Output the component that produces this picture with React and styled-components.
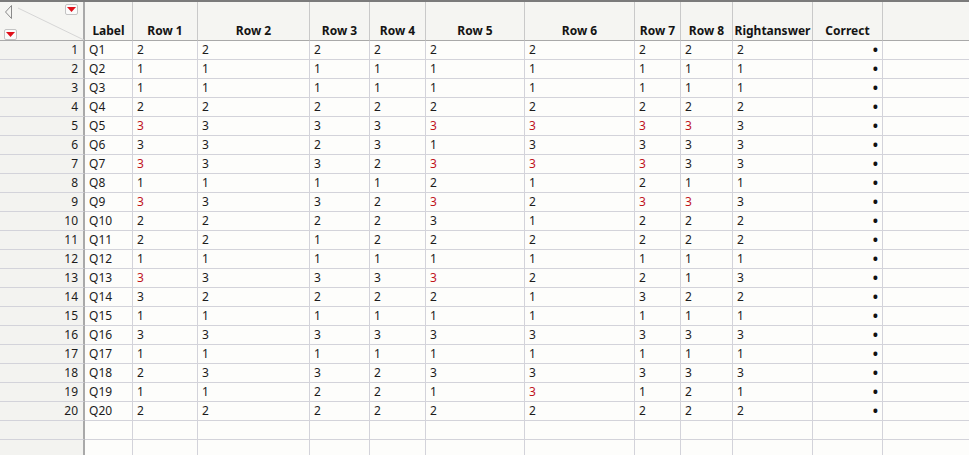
import React from "react";
import styled, { createGlobalStyle } from "styled-components";

const Global = createGlobalStyle`
  html, body { margin: 0; padding: 0; background: #fdfdfb; }
  body { font-family: "Noto Sans", "Open Sans", sans-serif; }
`;

const COLS = [48, 65, 112, 60, 56, 99, 110, 46, 52, 80, 70];
const HEADERS = ["Label", "Row 1", "Row 2", "Row 3", "Row 4", "Row 5", "Row 6", "Row 7", "Row 8", "Rightanswer", "Correct"];

const DATA = [
  "222222222", "111111111", "111111111", "222222222", "333333333",
  "332313333", "333233333", "111121211", "333232333", "222231222",
  "221222222", "111111111", "333332213", "322221322", "111111111",
  "333333333", "111111111", "233233333", "112213121", "222222222",
];

const RED = new Set([
  "4-0", "4-4", "4-5", "4-6", "4-7",
  "6-0", "6-4", "6-5", "6-6",
  "8-0", "8-4", "8-6", "8-7",
  "12-0", "12-4",
  "18-5",
]);

const Page = styled.div`
  width: 969px;
  height: 455px;
  overflow: hidden;
  border-top: 2px solid #7b7b7b;
  box-sizing: border-box;
  background: #fdfdfb;
`;

const Grid = styled.div`
  display: grid;
  grid-template-columns: 85px ${COLS.map((c) => c + "px").join(" ")} 1fr;
  grid-auto-rows: 19px;
  grid-template-rows: 39px;
  font-size: 12px;
  color: #1c1c1c;
`;

const Corner = styled.div`
  position: relative;
  background: #f5f5f2;
  border-right: 2px solid #a9a9a9;
  border-bottom: 1px solid #a9a9a9;
  box-sizing: border-box;
`;

const HeadCell = styled.div`
  background: #f5f5f2;
  border-right: 1px solid #c9c9c9;
  border-bottom: 1px solid #a9a9a9;
  box-sizing: border-box;
  display: flex;
  align-items: flex-end;
  justify-content: center;
  padding-bottom: 0;
  font-weight: 700;
  font-size: 12px;
  line-height: 18px;
  color: #141414;
  white-space: nowrap;
  overflow: hidden;
`;

const RowNum = styled.div`
  background: #f3f3f0;
  border-right: 2px solid #a9a9a9;
  border-bottom: 1px solid #d3d3da;
  box-sizing: border-box;
  text-align: right;
  padding-right: 5px;
  line-height: 18px;
`;

const Cell = styled.div`
  border-right: 1px solid #d3d3da;
  border-bottom: 1px solid #d3d3da;
  box-sizing: border-box;
  padding: 0 4px;
  line-height: 18px;
  text-align: left;
  color: ${(p) => (p.$red ? "#c0141c" : "#1c1c1c")};
  white-space: nowrap;
  overflow: hidden;
`;

const DotCell = styled(Cell)`
  text-align: right;
  font-size: 14px;
  font-weight: 700;
  line-height: 18px;
  overflow: visible;
  color: #111;
`;

const Filler = styled.div`
  border-bottom: 1px solid #d3d3da;
  box-sizing: border-box;
`;

const HeadFiller = styled.div`
  background: #f5f5f2;
  border-bottom: 1px solid #a9a9a9;
  box-sizing: border-box;
`;

const MenuBtn = styled.div`
  position: absolute;
  left: ${(p) => p.$x}px;
  top: ${(p) => p.$y}px;
  width: 13px;
  height: 11px;
  box-sizing: border-box;
  border: 1px solid #c4c4c4;
  border-radius: 2px;
  background: #fbfbfb;
  display: flex;
  align-items: center;
  justify-content: center;
`;

const Diag = styled.svg`
  position: absolute;
  left: 0;
  top: 0;
`;

function RedTri() {
  return (
    <svg width="9" height="5" viewBox="0 0 9 5">
      <polygon points="0,0 9,0 4.5,5" fill="#e0101a" />
    </svg>
  );
}

export default function App() {
  const rows = [];
  DATA.forEach((vals, r) => {
    rows.push(<RowNum key={`n${r}`}>{r + 1}</RowNum>);
    rows.push(<Cell key={`l${r}`}>Q{r + 1}</Cell>);
    vals.split("").forEach((v, c) => {
      rows.push(
        <Cell key={`c${r}-${c}`} $red={RED.has(`${r}-${c}`)}>
          {v}
        </Cell>
      );
    });
    rows.push(<DotCell key={`k${r}`}>•</DotCell>);
    rows.push(<Filler key={`f${r}`} />);
  });
  for (let r = 0; r < 3; r++) {
    rows.push(<RowNum key={`en${r}`} />);
    COLS.forEach((_, c) => rows.push(<Cell key={`e${r}-${c}`} />));
    rows.push(<Filler key={`ef${r}`} />);
  }

  return (
    <Page>
      <Global />
      <Grid>
        <Corner>
          <Diag width="85" height="39">
            <line x1="18" y1="6" x2="84" y2="38" stroke="#d6d6d6" strokeWidth="1" />
            <polygon points="11.5,3.5 5.5,10 11.5,16.5" fill="none" stroke="#8a8a8a" strokeWidth="1" />
          </Diag>
          <MenuBtn $x={65} $y={2}>
            <RedTri />
          </MenuBtn>
          <MenuBtn $x={4} $y={27}>
            <RedTri />
          </MenuBtn>
        </Corner>
        {HEADERS.map((h) => (
          <HeadCell key={h}>{h}</HeadCell>
        ))}
        <HeadFiller />
        {rows}
      </Grid>
    </Page>
  );
}
